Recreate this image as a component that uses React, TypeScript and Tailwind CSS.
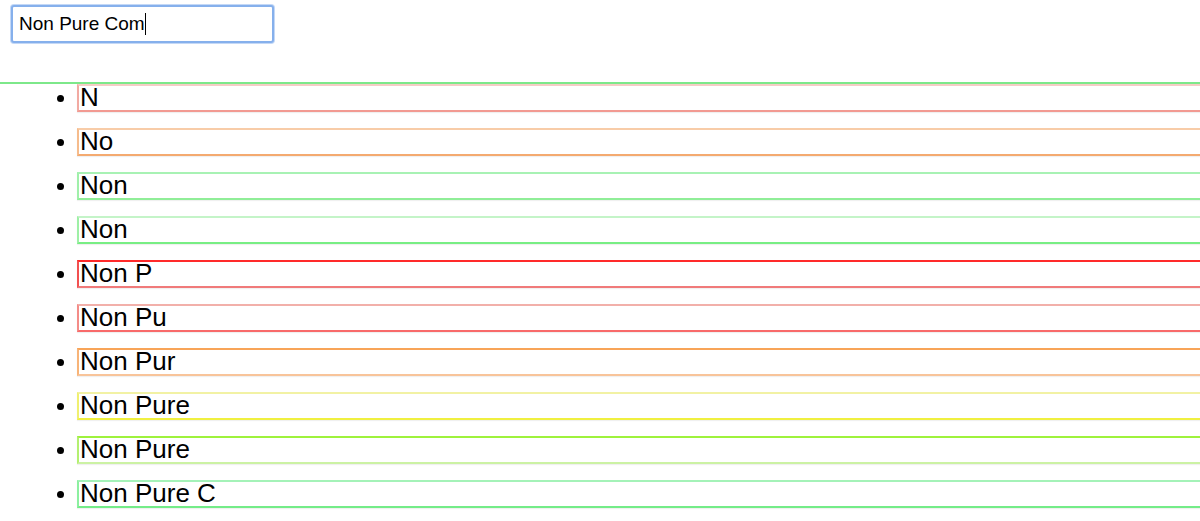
import React from "react";

interface Row {
  label: string;
  top: string;
  bottom: string;
}

const rows: Row[] = [
  { label: "N", top: "border-t-[#f6ccc6] border-l-[#f2aaa2]", bottom: "border-b-[#f29a92]" },
  { label: "No", top: "border-t-[#f8cca8] border-l-[#f6bc8c]", bottom: "border-b-[#f4aa70]" },
  { label: "Non", top: "border-t-[#a8f2b4] border-l-[#a0f0aa]", bottom: "border-b-[#90ee98]" },
  { label: "Non", top: "border-t-[#c4f4c8] border-l-[#9ef0a6]", bottom: "border-b-[#78ee84]" },
  { label: "Non P", top: "border-t-[#ff2a2a] border-l-[#f25050]", bottom: "border-b-[#f07a7a]" },
  { label: "Non Pu", top: "border-t-[#f2b0aa] border-l-[#f48c88]", bottom: "border-b-[#f86a6a]" },
  { label: "Non Pur", top: "border-t-[#f8a458] border-l-[#f8b478]", bottom: "border-b-[#f8c49a]" },
  { label: "Non Pure", top: "border-t-[#f2f2a4] border-l-[#f0f070]", bottom: "border-b-[#f0f040]" },
  { label: "Non Pure", top: "border-t-[#9ef23c] border-l-[#b4f070]", bottom: "border-b-[#ccf2a4]" },
  { label: "Non Pure C", top: "border-t-[#a4f2b8] border-l-[#8cf0a0]", bottom: "border-b-[#74ec88]" },
];

export default function App() {
  return (
    <div
      className="h-[521px] w-[1200px] overflow-hidden bg-white text-black"
      style={{ fontFamily: '"Liberation Sans", Arial, sans-serif' }}
    >
      <div className="h-[82px] pl-[11px] pt-[5px]">
        <div className="relative h-[38px] w-[263px]">
          <input
            readOnly
            value="Non Pure Com"
            className="h-full w-full rounded-[3px] border-2 border-[#86b0ec] bg-white pl-[6px] text-[19px] leading-none outline-none ring-1 ring-[#c4d8f6]"
          />
          <span className="absolute left-[134px] top-[8px] h-[22px] w-px bg-black" />
        </div>
      </div>

      <ul className="border-t-2 border-[#7de88a]">
        {rows.map((r, i) => (
          <li key={i} className="mb-[16px] flex items-center pl-[57px]">
            <span className="h-[7px] w-[7px] shrink-0 rounded-full bg-black" />
            <div
              className={`ml-[13px] h-[28px] w-[1200px] shrink-0 border-y-2 border-l-2 pl-px text-[26px] leading-[23px] shadow-[0_1px_1px_rgba(0,0,0,0.06)] ${r.top} ${r.bottom}`}
            >
              {r.label}
            </div>
          </li>
        ))}
      </ul>
    </div>
  );
}
